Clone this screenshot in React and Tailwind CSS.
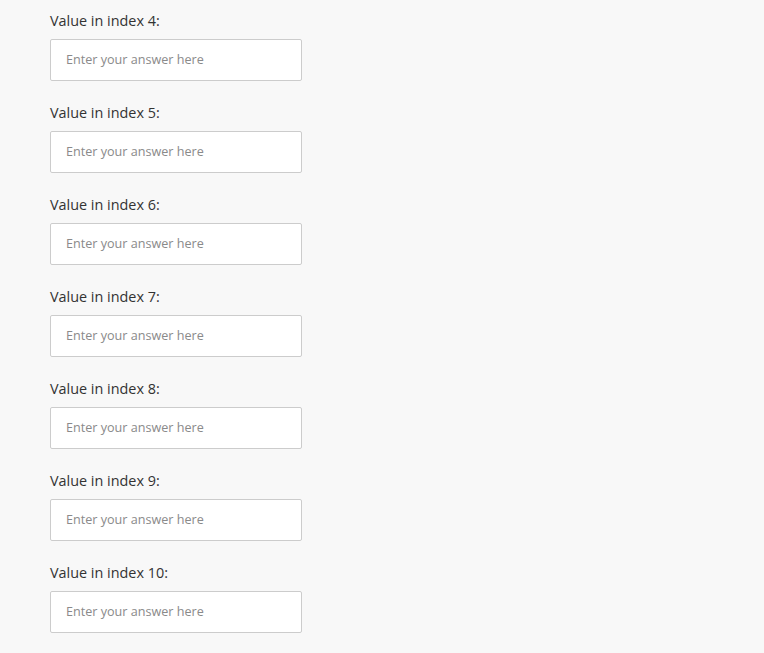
export default function App() {
  const items = [4, 5, 6, 7, 8, 9, 10];
  return (
    <div className="min-h-[653px] w-full bg-[#f8f8f8] pt-[11px] pl-[50px]" style={{ fontFamily: '"Open Sans", sans-serif' }}>
      {items.map((n) => (
        <div key={n} className="mb-[22px]">
          <label className="block text-[14.4px] leading-[20px] text-[#333] mb-[8px]">Value in index {n}:</label>
          <input
            type="text"
            placeholder="Enter your answer here"
            className="block w-[252px] h-[42px] bg-white border border-[#cccccc] rounded-[2px] pl-[15px] pb-[2px] text-[12.6px] text-[#333] placeholder:text-[#8a8a8a] outline-none"
            style={{ fontFamily: '"Open Sans", sans-serif' }}
          />
        </div>
      ))}
    </div>
  );
}
